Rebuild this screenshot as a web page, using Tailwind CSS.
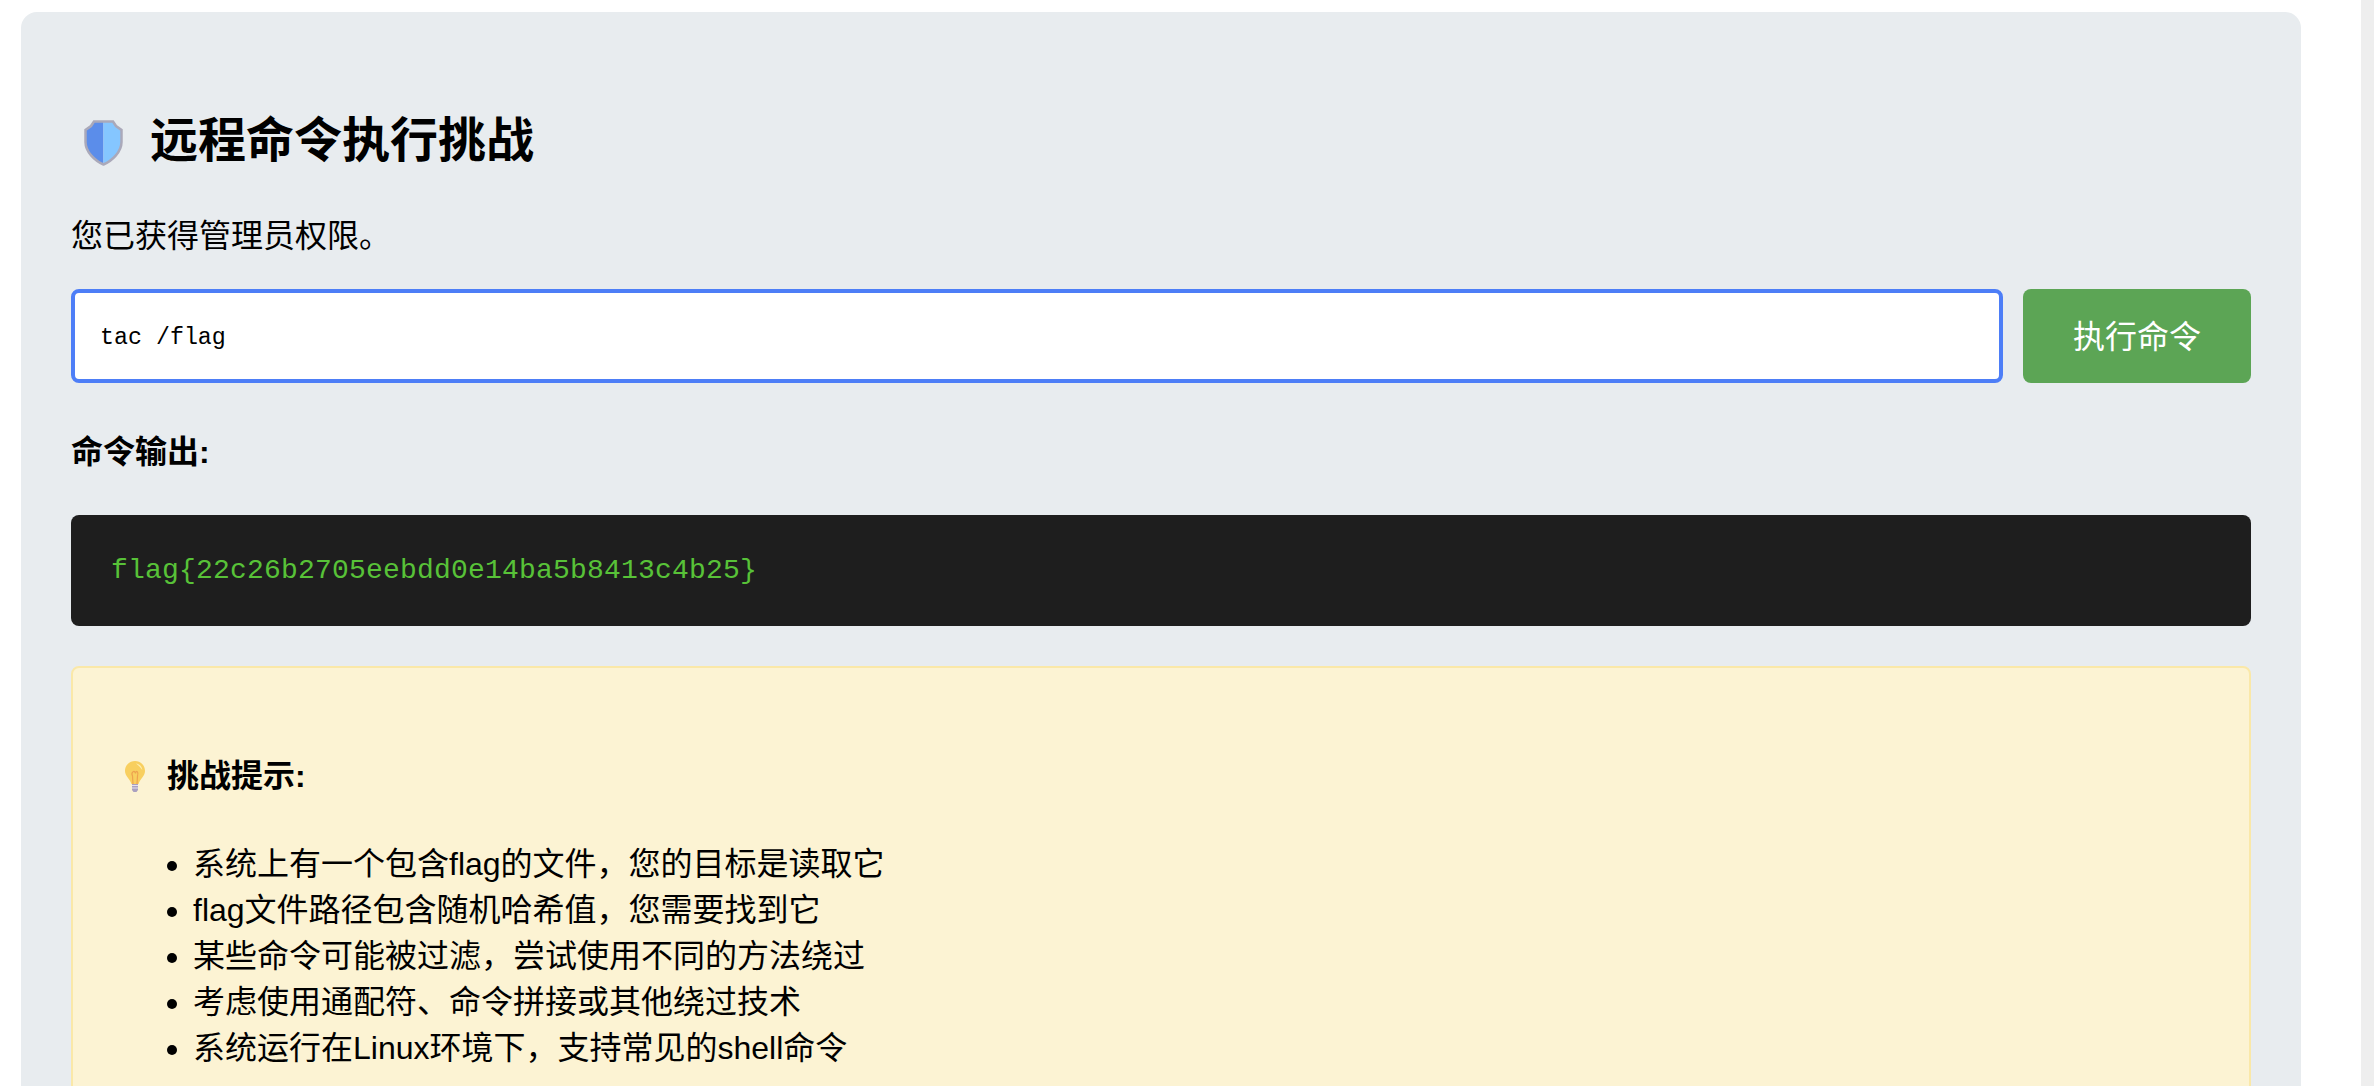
<!DOCTYPE html>
<html lang="zh-CN">
<head>
    <meta charset="UTF-8">
    <meta name="viewport" content="width=device-width, initial-scale=1.0">
    <title>远程命令执行挑战</title>
    <script src="https://cdn.jsdelivr.net/npm/@tailwindcss/browser@4"></script>
</head>
<body class="bg-white text-black text-[32px] leading-[46px] font-['Liberation_Sans','Noto_Sans_CJK_SC',sans-serif]">
    <div class="flex h-screen overflow-hidden">
        <main class="flex-1 min-w-0 pt-3 pl-[21px] pr-[60px]">
            <!-- Card -->
            <section class="bg-[#e8ecef] rounded-[16px] px-[50px] pt-[100px] pb-10">
                <h1 class="flex items-center text-[48px] leading-[58px] font-bold">
                    <svg class="ml-[13px] mr-[27px] mt-[3px]" width="39" height="46" viewBox="0 0 39 46">
                        <path d="M19.5 1.5H10L7 6L1.5 10V22C1.5 32 11 41 19.5 44.5Z" fill="#5b8dea"/>
                        <path d="M19.5 1.5H29L32 6L37.5 10V22C37.5 32 28 41 19.5 44.5Z" fill="#85c6ff"/>
                        <path d="M10 1.5H29L32 6L37.5 10V22C37.5 32 28 41 19.5 44.5C11 41 1.5 32 1.5 22V10L7 6Z" fill="none" stroke="#aaa9ba" stroke-width="2.5"/>
                    </svg>
                    远程命令执行挑战
                </h1>
                <p class="mt-[43px]">您已获得管理员权限。</p>

                <!-- Command form -->
                <form class="flex gap-5 mt-[30px]">
                    <input type="text" value="tac /flag" class="flex-1 min-w-0 h-[94px] pl-[25px] pr-[26px] pt-1 bg-white border-4 border-[#4d7ef7] rounded-[8px] outline-none text-[23.3px] text-black font-['Liberation_Mono','Noto_Sans_CJK_SC',monospace]">
                    <button type="button" class="w-[228px] h-[94px] pt-[2px] bg-[#5ca555] rounded-[8px] text-white text-[32px]">执行命令</button>
                </form>

                <p class="mt-[46px] font-bold">命令输出:</p>
                <pre class="mt-10 h-[111px] px-10 flex items-center bg-[#1e1e1e] rounded-[8px] text-[28px] tracking-[0.2px] text-[#58c238] font-['Liberation_Mono',monospace]">flag{22c26b2705eebdd0e14ba5b8413c4b25}</pre>

                <!-- Hints -->
                <div class="mt-10 pt-[85px] pb-12 pl-[120px] bg-[#fcf3d3] border-2 border-[#fae8a8] rounded-[8px]">
                    <p class="flex items-center font-bold -ml-[68px]">
                        <svg class="mr-[22px]" width="20" height="31" viewBox="0 0 20 31">
                            <path d="M7 22H13V29L11.5 31H8.5L7 29Z" fill="#a9a0c0"/>
                            <path d="M7 24.5H13M7 27H13" stroke="#e6e2ee" stroke-width="1"/>
                            <path d="M10 0C15.5 0 20 4.2 20 10C20 15 15 18 13.5 23H6.5C5 18 0 15 0 10C0 4.2 4.5 0 10 0Z" fill="#f8cf5f"/>
                            <path d="M11 2.5C14.5 2.8 17 5.5 17.3 9C15.5 6.5 13.5 4.5 11 2.5Z" fill="#fdeeb0"/>
                            <path d="M8 23L7.5 15C5.5 11 10 8.5 10.5 12.5C11 8.5 14 11 12.5 15L12 23" fill="none" stroke="#eda34f" stroke-width="1.2"/>
                        </svg>
                        挑战提示:
                    </p>
                    <ul class="mt-[42px] list-disc">
                        <li>系统上有一个包含flag的文件，您的目标是读取它</li>
                        <li>flag文件路径包含随机哈希值，您需要找到它</li>
                        <li>某些命令可能被过滤，尝试使用不同的方法绕过</li>
                        <li>考虑使用通配符、命令拼接或其他绕过技术</li>
                        <li>系统运行在Linux环境下，支持常见的shell命令</li>
                    </ul>
                </div>
            </section>
        </main>
        <!-- Scrollbar track -->
        <div class="w-[13px] shrink-0 bg-[#eeeeee]"></div>
    </div>
</body>
</html>
